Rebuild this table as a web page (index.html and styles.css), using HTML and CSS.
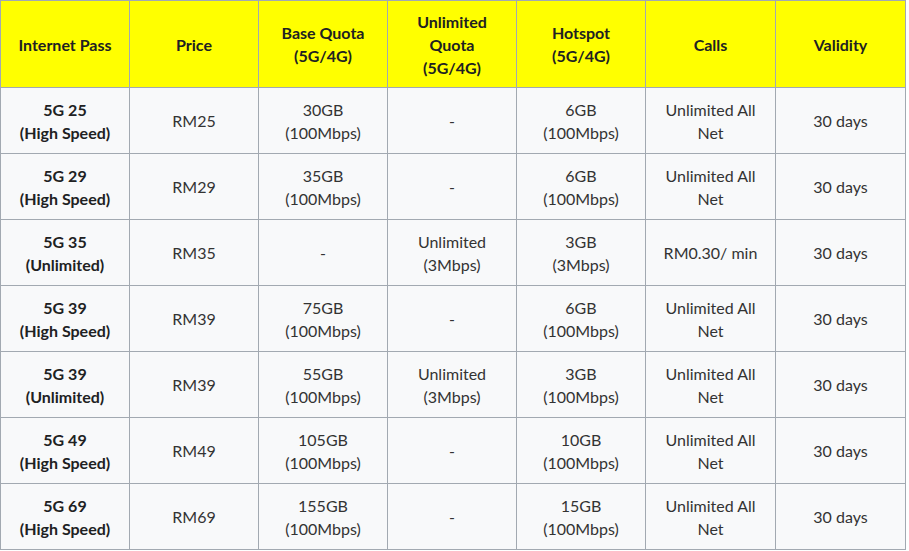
FILE: index.html
```html
<!DOCTYPE html>
<html>
<head>
<meta charset="utf-8">
<link rel="stylesheet" href="styles.css">
</head>
<body>
<table class="plans">
<colgroup>
<col class="c1"><col class="c2"><col class="c3"><col class="c4"><col class="c5"><col class="c6"><col class="c7">
</colgroup>
<thead>
<tr>
<th>Internet Pass</th><th>Price</th><th>Base Quota<br>(5G/4G)</th><th>Unlimited<br>Quota<br>(5G/4G)</th><th>Hotspot<br>(5G/4G)</th><th>Calls</th><th>Validity</th>
</tr>
</thead>
<tbody>
<tr><td class="name">5G 25<br>(High Speed)</td><td>RM25</td><td>30GB<br>(100Mbps)</td><td>-</td><td>6GB<br>(100Mbps)</td><td>Unlimited All<br>Net</td><td>30 days</td></tr>
<tr><td class="name">5G 29<br>(High Speed)</td><td>RM29</td><td>35GB<br>(100Mbps)</td><td>-</td><td>6GB<br>(100Mbps)</td><td>Unlimited All<br>Net</td><td>30 days</td></tr>
<tr><td class="name">5G 35<br>(Unlimited)</td><td>RM35</td><td>-</td><td>Unlimited<br>(3Mbps)</td><td>3GB<br>(3Mbps)</td><td>RM0.30/ min</td><td>30 days</td></tr>
<tr><td class="name">5G 39<br>(High Speed)</td><td>RM39</td><td>75GB<br>(100Mbps)</td><td>-</td><td>6GB<br>(100Mbps)</td><td>Unlimited All<br>Net</td><td>30 days</td></tr>
<tr><td class="name">5G 39<br>(Unlimited)</td><td>RM39</td><td>55GB<br>(100Mbps)</td><td>Unlimited<br>(3Mbps)</td><td>3GB<br>(100Mbps)</td><td>Unlimited All<br>Net</td><td>30 days</td></tr>
<tr><td class="name">5G 49<br>(High Speed)</td><td>RM49</td><td>105GB<br>(100Mbps)</td><td>-</td><td>10GB<br>(100Mbps)</td><td>Unlimited All<br>Net</td><td>30 days</td></tr>
<tr><td class="name">5G 69<br>(High Speed)</td><td>RM69</td><td>155GB<br>(100Mbps)</td><td>-</td><td>15GB<br>(100Mbps)</td><td>Unlimited All<br>Net</td><td>30 days</td></tr>
</tbody>
</table>
</body>
</html>
```
FILE: styles.css
```css
html, body {
  margin: 0;
  padding: 0;
  background: #ffffff;
}
body {
  font-family: Lato, "Liberation Sans", sans-serif;
  font-size: 16px;
  line-height: 23px;
  color: #333;
}
.plans {
  border-collapse: collapse;
  table-layout: fixed;
  width: 906px;
  border: 1px solid #a2a9b1;
}
.plans col { width: 129px; }
.plans .c6 { width: 130px; }
.plans .c7 { width: 130px; }
.plans th, .plans td {
  border: 1px solid #a2a9b1;
  text-align: center;
  vertical-align: middle;
  padding: 0 4px;
}
.plans th {
  background: #ffff00;
  color: #202122;
  font-weight: bold;
  height: 86px;
}
.plans td {
  background: #f8f9fa;
  color: #333;
  height: 65px;
}
.plans td.name {
  font-weight: bold;
  color: #202122;
}
```
